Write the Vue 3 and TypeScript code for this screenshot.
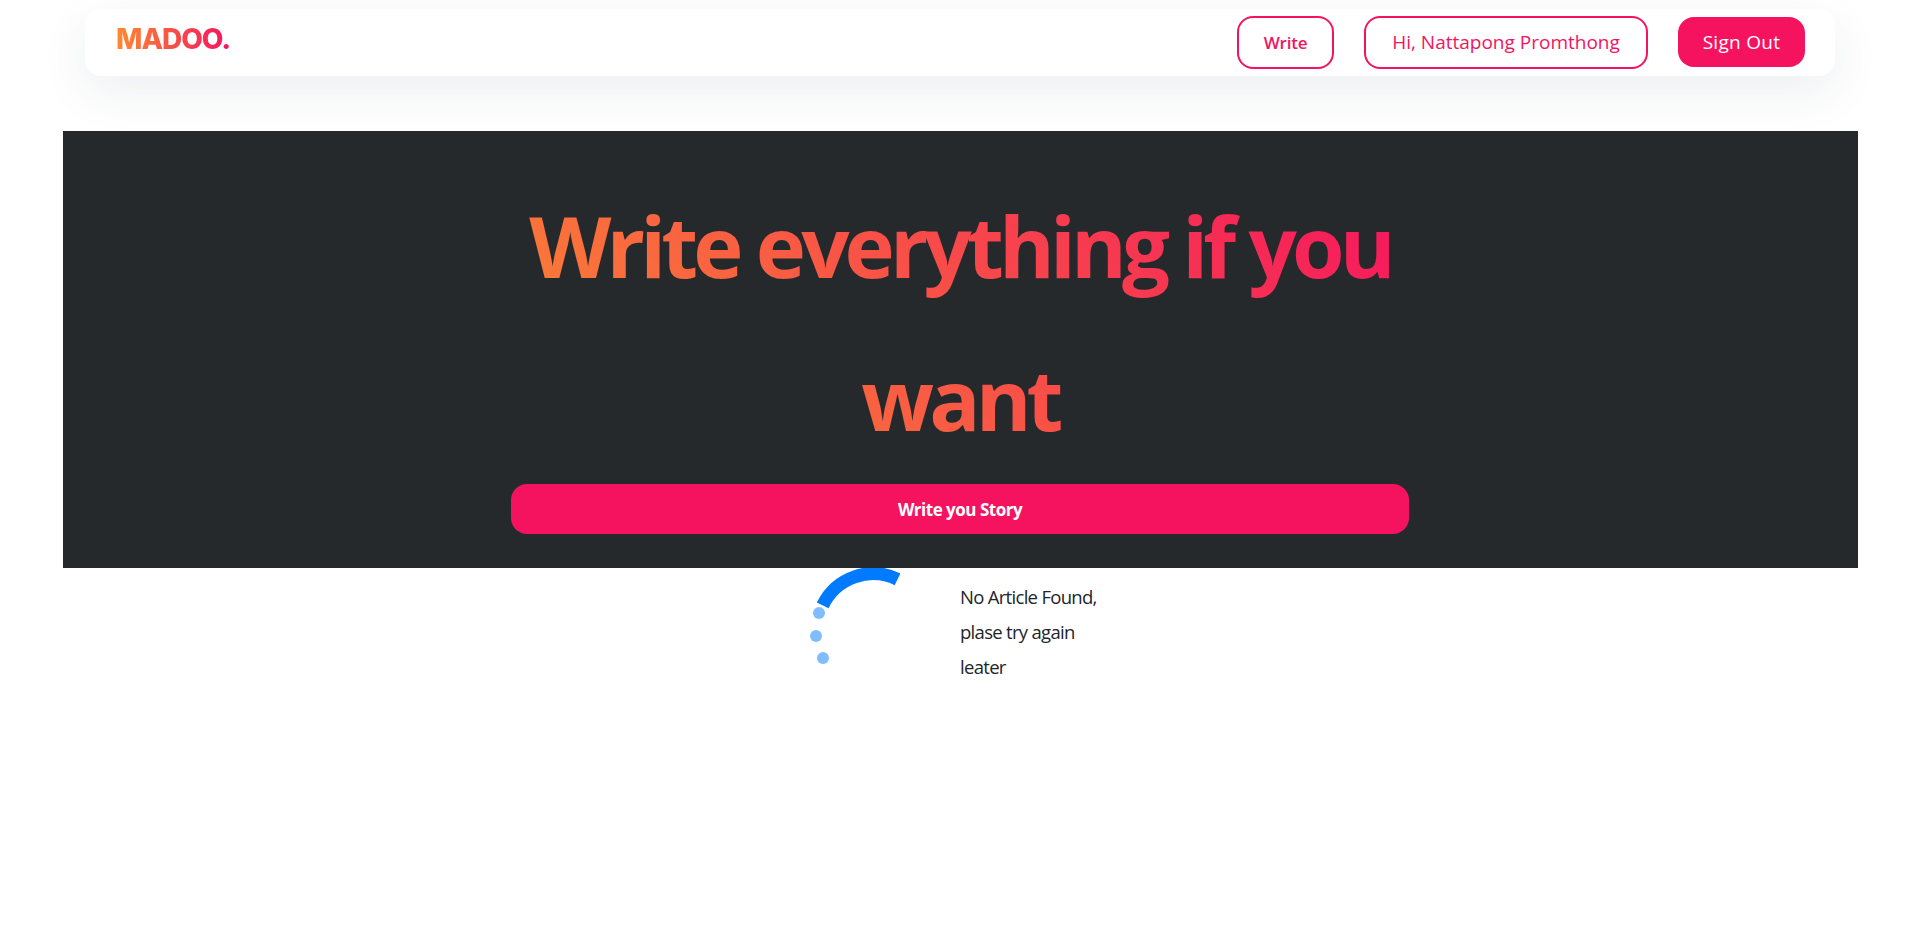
<script setup lang="ts">
const lines: string[] = ['No Article Found,', 'plase try again', 'leater'];
const dots = [
  { cx: 39, cy: 45 },
  { cx: 36, cy: 68 },
  { cx: 43, cy: 90 },
];
</script>

<template>
  <div class="page">
    <nav class="navbar">
      <a class="brand">MADOO.</a>
      <div class="nav-actions">
        <button class="btn btn-outline btn-write">Write</button>
        <button class="btn btn-outline btn-user">Hi, Nattapong Promthong</button>
        <button class="btn btn-fill">Sign Out</button>
      </div>
    </nav>

    <section class="hero">
      <h1 class="hero-title">Write everything if you want</h1>
      <button class="hero-btn">Write you Story</button>
    </section>

    <section class="empty">
      <svg class="spinner" width="120" height="110" viewBox="0 0 120 110">
        <path d="M42.7 37.3 A 56 56 0 0 1 117.5 11.3" fill="none" stroke="#007bff" stroke-width="13" />
        <circle v-for="(d, i) in dots" :key="i" :cx="d.cx" :cy="d.cy" r="6" fill="#80bdff" />
      </svg>
      <div class="empty-text">
        <p v-for="line in lines" :key="line">{{ line }}</p>
      </div>
    </section>
  </div>
</template>

<style scoped>
.page {
  font-family: "Open Sans", "Noto Sans", sans-serif;
  color: #212529;
}

.navbar {
  height: 67px;
  margin: 9px 85px 0;
  padding: 0 30px 0 31px;
  display: flex;
  align-items: center;
  justify-content: space-between;
  background: #fff;
  border-radius: 16px;
  box-shadow: 0 16px 48px rgba(31, 45, 61, 0.08);
}

.brand {
  font-family: Inter, "Liberation Sans", sans-serif;
  font-size: 28px;
  font-weight: 800;
  letter-spacing: -1px;
  line-height: 1;
  margin-bottom: 8px;
  background: linear-gradient(90deg, #fd8a32, #f5135f);
  -webkit-background-clip: text;
  background-clip: text;
  color: transparent;
}

.nav-actions {
  display: flex;
  align-items: center;
  margin-bottom: 1px;
}

.btn {
  font-family: inherit;
  box-sizing: border-box;
  border-radius: 16px;
  font-size: 19px;
  cursor: pointer;
}

.btn-outline {
  height: 53px;
  background: #fff;
  border: 2px solid #f5135f;
  color: #f5135f;
}

.btn-write {
  width: 97px;
  margin-right: 30px;
  font-size: 17px;
  font-weight: 600;
  letter-spacing: -0.2px;
}

.btn-user {
  width: 284px;
  margin-right: 30px;
}

.btn-fill {
  width: 127px;
  height: 50px;
  background: #f5135f;
  border: none;
  color: #fff;
  letter-spacing: 0.3px;
}

.hero {
  box-sizing: border-box;
  height: 437px;
  margin: 55px 62px 0 63px;
  padding-top: 38px;
  background: #26292c;
  display: flex;
  flex-direction: column;
  align-items: center;
}

.hero-title {
  width: 898px;
  margin: 0 1px 9px 0;
  font-size: 85px;
  font-weight: 700;
  line-height: 153px;
  letter-spacing: -4.9px;
  text-align: center;
  background: linear-gradient(45deg, #fb8f30, #f5115f);
  -webkit-background-clip: text;
  background-clip: text;
  color: transparent;
}

.hero-btn {
  width: 898px;
  height: 50px;
  margin-right: 1px;
  border: none;
  border-radius: 16px;
  background: #f5135f;
  color: #fff;
  font-family: inherit;
  font-size: 17px;
  font-weight: 700;
  letter-spacing: -0.5px;
  cursor: pointer;
}

.empty {
  display: flex;
  align-items: flex-start;
  margin-left: 780px;
}

.spinner {
  flex: none;
  margin-right: 60px;
}

.empty-text {
  padding-top: 11px;
  font-size: 18.5px;
  line-height: 35px;
  letter-spacing: -0.7px;
  width: 150px;
}

.empty-text p {
  margin: 0;
}
</style>
